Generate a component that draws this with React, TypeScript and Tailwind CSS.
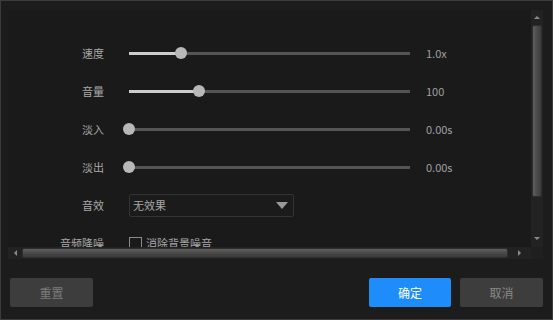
import React from 'react';

const sliders = [
  { label: '速度', value: '1.0x', pos: 52 },
  { label: '音量', value: '100', pos: 70 },
  { label: '淡入', value: '0.00s', pos: 0 },
  { label: '淡出', value: '0.00s', pos: 0 },
];

function Slider({ pos }: { pos: number }) {
  return (
    <div className="relative w-[281px] h-[12px] flex items-center">
      <div className="h-[3px] w-full bg-[#555555]" />
      <div className="absolute left-0 h-[3px] bg-[#cdcdcd]" style={{ width: pos }} />
      <div
        className="absolute top-0 w-[12px] h-[12px] rounded-full bg-[#b8b8b8]"
        style={{ left: pos - 6 }}
      />
    </div>
  );
}

function Row({ label, children }: { label: string; children: React.ReactNode }) {
  return (
    <div className="flex items-center h-[38px] shrink-0">
      <div className="w-[96px] text-right text-[11px] text-[#a8a8a8]">{label}</div>
      <div className="ml-[25px] flex items-center">{children}</div>
    </div>
  );
}

function VScroll() {
  return (
    <div className="w-[12px] h-full bg-[#222222] flex flex-col items-center">
      <div className="h-[15px] flex items-center justify-center">
        <div className="w-0 h-0 border-x-[3px] border-x-transparent border-b-[3px] border-b-[#8a8a8a]" />
      </div>
      <div className="w-[10px] h-[172px] rounded-[2px] border border-[#2e2e2e] bg-gradient-to-r from-[#5e5e5e] via-[#4a4a4a] to-[#3c3c3c]" />
      <div className="flex-1" />
      <div className="h-[18px] flex items-center justify-center">
        <div className="w-0 h-0 border-x-[3px] border-x-transparent border-t-[3px] border-t-[#8a8a8a]" />
      </div>
    </div>
  );
}

function HScroll() {
  return (
    <div className="w-[523px] h-full bg-[#222222] flex items-center">
      <div className="w-[14px] flex items-center justify-center">
        <div className="w-0 h-0 border-y-[3px] border-y-transparent border-r-[3px] border-r-[#8a8a8a]" />
      </div>
      <div className="w-[486px] h-[10px] rounded-[2px] border border-[#2e2e2e] bg-gradient-to-b from-[#606060] via-[#4a4a4a] to-[#3a3a3a]" />
      <div className="flex-1 flex items-center justify-center">
        <div className="w-0 h-0 border-y-[3px] border-y-transparent border-l-[3px] border-l-[#8a8a8a]" />
      </div>
    </div>
  );
}

export default function App() {
  return (
    <div className="w-[553px] h-[320px] border border-[#3c3c3c] bg-[#1c1c1c] font-['Noto_Sans_CJK_SC',sans-serif] flex flex-col">
      {/* Scroll panel */}
      <div className="mt-[9px] ml-[7px] w-[535px] h-[249px] flex flex-col bg-[#1a1a1a]">
        <div className="flex h-[237px]">
          <div className="w-[523px] overflow-hidden pt-[24px] flex flex-col">
            {sliders.map((s) => (
              <Row key={s.label} label={s.label}>
                <Slider pos={s.pos} />
                <span className="ml-[16px] text-[11px] text-[#a0a0a0]">{s.value}</span>
              </Row>
            ))}
            <Row label="音效">
              <div className="w-[165px] h-[23px] rounded-[2px] border border-[#333333] bg-[#1b1b1b] flex items-center justify-between pl-[3px] pr-[5px]">
                <span className="text-[11px] text-[#a8a8a8]">无效果</span>
                <div className="w-0 h-0 border-x-[6px] border-x-transparent border-t-[7px] border-t-[#9a9a9a]" />
              </div>
            </Row>
            <Row label="音频降噪">
              <div className="w-[13px] h-[13px] border border-[#8a8a8a]" />
              <span className="ml-[4px] text-[11px] text-[#a8a8a8]">消除背景噪音</span>
            </Row>
          </div>
          <VScroll />
        </div>
        <div className="flex h-[12px]">
          <HScroll />
          <div className="w-[12px] h-full bg-[#1f1f1f]" />
        </div>
      </div>

      {/* Buttons */}
      <div className="mt-[19px] px-[9px] flex justify-between">
        <button className="w-[83px] h-[29px] rounded-[2px] bg-[#3d3d3d] text-[12px] text-[#7c7c7c]">重置</button>
        <div className="flex gap-[9px]">
          <button className="w-[82px] h-[29px] rounded-[2px] bg-[#1e8cfa] text-[12px] text-white">确定</button>
          <button className="w-[83px] h-[29px] rounded-[2px] bg-[#3d3d3d] text-[12px] text-[#8a8a8a]">取消</button>
        </div>
      </div>
    </div>
  );
}
